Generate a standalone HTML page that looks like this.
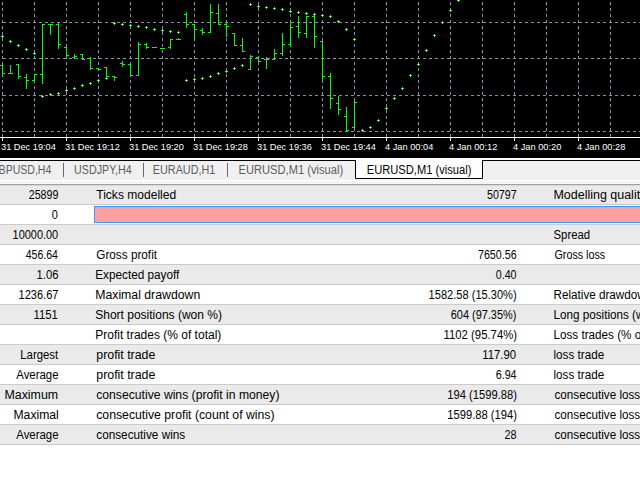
<!DOCTYPE html>
<html><head><meta charset="utf-8"><style>
html,body{margin:0;padding:0;background:#fff;width:640px;height:480px;overflow:hidden}
svg{display:block}
text{font-family:"Liberation Sans",sans-serif;white-space:pre}
</style></head><body>
<svg width="640" height="480" viewBox="0 0 640 480">
<rect x="0" y="0" width="640" height="480" fill="#ffffff"/>
<rect x="0" y="0" width="640" height="158" fill="#000000"/>
<g shape-rendering="crispEdges"><path fill="#8494a8" d="M2 2h1v3h-1zM2 8h1v3h-1zM2 14h1v3h-1zM2 20h1v3h-1zM2 26h1v3h-1zM2 32h1v3h-1zM2 38h1v3h-1zM2 44h1v3h-1zM2 50h1v3h-1zM2 56h1v3h-1zM2 62h1v3h-1zM2 68h1v3h-1zM2 74h1v3h-1zM2 80h1v3h-1zM2 86h1v3h-1zM2 92h1v3h-1zM2 98h1v3h-1zM2 104h1v3h-1zM2 110h1v3h-1zM2 116h1v3h-1zM2 122h1v3h-1zM2 128h1v3h-1zM2 134h1v3h-1zM34 2h1v3h-1zM34 8h1v3h-1zM34 14h1v3h-1zM34 20h1v3h-1zM34 26h1v3h-1zM34 32h1v3h-1zM34 38h1v3h-1zM34 44h1v3h-1zM34 50h1v3h-1zM34 56h1v3h-1zM34 62h1v3h-1zM34 68h1v3h-1zM34 74h1v3h-1zM34 80h1v3h-1zM34 86h1v3h-1zM34 92h1v3h-1zM34 98h1v3h-1zM34 104h1v3h-1zM34 110h1v3h-1zM34 116h1v3h-1zM34 122h1v3h-1zM34 128h1v3h-1zM34 134h1v3h-1zM66 2h1v3h-1zM66 8h1v3h-1zM66 14h1v3h-1zM66 20h1v3h-1zM66 26h1v3h-1zM66 32h1v3h-1zM66 38h1v3h-1zM66 44h1v3h-1zM66 50h1v3h-1zM66 56h1v3h-1zM66 62h1v3h-1zM66 68h1v3h-1zM66 74h1v3h-1zM66 80h1v3h-1zM66 86h1v3h-1zM66 92h1v3h-1zM66 98h1v3h-1zM66 104h1v3h-1zM66 110h1v3h-1zM66 116h1v3h-1zM66 122h1v3h-1zM66 128h1v3h-1zM66 134h1v3h-1zM98 2h1v3h-1zM98 8h1v3h-1zM98 14h1v3h-1zM98 20h1v3h-1zM98 26h1v3h-1zM98 32h1v3h-1zM98 38h1v3h-1zM98 44h1v3h-1zM98 50h1v3h-1zM98 56h1v3h-1zM98 62h1v3h-1zM98 68h1v3h-1zM98 74h1v3h-1zM98 80h1v3h-1zM98 86h1v3h-1zM98 92h1v3h-1zM98 98h1v3h-1zM98 104h1v3h-1zM98 110h1v3h-1zM98 116h1v3h-1zM98 122h1v3h-1zM98 128h1v3h-1zM98 134h1v3h-1zM130 2h1v3h-1zM130 8h1v3h-1zM130 14h1v3h-1zM130 20h1v3h-1zM130 26h1v3h-1zM130 32h1v3h-1zM130 38h1v3h-1zM130 44h1v3h-1zM130 50h1v3h-1zM130 56h1v3h-1zM130 62h1v3h-1zM130 68h1v3h-1zM130 74h1v3h-1zM130 80h1v3h-1zM130 86h1v3h-1zM130 92h1v3h-1zM130 98h1v3h-1zM130 104h1v3h-1zM130 110h1v3h-1zM130 116h1v3h-1zM130 122h1v3h-1zM130 128h1v3h-1zM130 134h1v3h-1zM162 2h1v3h-1zM162 8h1v3h-1zM162 14h1v3h-1zM162 20h1v3h-1zM162 26h1v3h-1zM162 32h1v3h-1zM162 38h1v3h-1zM162 44h1v3h-1zM162 50h1v3h-1zM162 56h1v3h-1zM162 62h1v3h-1zM162 68h1v3h-1zM162 74h1v3h-1zM162 80h1v3h-1zM162 86h1v3h-1zM162 92h1v3h-1zM162 98h1v3h-1zM162 104h1v3h-1zM162 110h1v3h-1zM162 116h1v3h-1zM162 122h1v3h-1zM162 128h1v3h-1zM162 134h1v3h-1zM194 2h1v3h-1zM194 8h1v3h-1zM194 14h1v3h-1zM194 20h1v3h-1zM194 26h1v3h-1zM194 32h1v3h-1zM194 38h1v3h-1zM194 44h1v3h-1zM194 50h1v3h-1zM194 56h1v3h-1zM194 62h1v3h-1zM194 68h1v3h-1zM194 74h1v3h-1zM194 80h1v3h-1zM194 86h1v3h-1zM194 92h1v3h-1zM194 98h1v3h-1zM194 104h1v3h-1zM194 110h1v3h-1zM194 116h1v3h-1zM194 122h1v3h-1zM194 128h1v3h-1zM194 134h1v3h-1zM226 2h1v3h-1zM226 8h1v3h-1zM226 14h1v3h-1zM226 20h1v3h-1zM226 26h1v3h-1zM226 32h1v3h-1zM226 38h1v3h-1zM226 44h1v3h-1zM226 50h1v3h-1zM226 56h1v3h-1zM226 62h1v3h-1zM226 68h1v3h-1zM226 74h1v3h-1zM226 80h1v3h-1zM226 86h1v3h-1zM226 92h1v3h-1zM226 98h1v3h-1zM226 104h1v3h-1zM226 110h1v3h-1zM226 116h1v3h-1zM226 122h1v3h-1zM226 128h1v3h-1zM226 134h1v3h-1zM258 2h1v3h-1zM258 8h1v3h-1zM258 14h1v3h-1zM258 20h1v3h-1zM258 26h1v3h-1zM258 32h1v3h-1zM258 38h1v3h-1zM258 44h1v3h-1zM258 50h1v3h-1zM258 56h1v3h-1zM258 62h1v3h-1zM258 68h1v3h-1zM258 74h1v3h-1zM258 80h1v3h-1zM258 86h1v3h-1zM258 92h1v3h-1zM258 98h1v3h-1zM258 104h1v3h-1zM258 110h1v3h-1zM258 116h1v3h-1zM258 122h1v3h-1zM258 128h1v3h-1zM258 134h1v3h-1zM290 2h1v3h-1zM290 8h1v3h-1zM290 14h1v3h-1zM290 20h1v3h-1zM290 26h1v3h-1zM290 32h1v3h-1zM290 38h1v3h-1zM290 44h1v3h-1zM290 50h1v3h-1zM290 56h1v3h-1zM290 62h1v3h-1zM290 68h1v3h-1zM290 74h1v3h-1zM290 80h1v3h-1zM290 86h1v3h-1zM290 92h1v3h-1zM290 98h1v3h-1zM290 104h1v3h-1zM290 110h1v3h-1zM290 116h1v3h-1zM290 122h1v3h-1zM290 128h1v3h-1zM290 134h1v3h-1zM322 2h1v3h-1zM322 8h1v3h-1zM322 14h1v3h-1zM322 20h1v3h-1zM322 26h1v3h-1zM322 32h1v3h-1zM322 38h1v3h-1zM322 44h1v3h-1zM322 50h1v3h-1zM322 56h1v3h-1zM322 62h1v3h-1zM322 68h1v3h-1zM322 74h1v3h-1zM322 80h1v3h-1zM322 86h1v3h-1zM322 92h1v3h-1zM322 98h1v3h-1zM322 104h1v3h-1zM322 110h1v3h-1zM322 116h1v3h-1zM322 122h1v3h-1zM322 128h1v3h-1zM322 134h1v3h-1zM354 2h1v3h-1zM354 8h1v3h-1zM354 14h1v3h-1zM354 20h1v3h-1zM354 26h1v3h-1zM354 32h1v3h-1zM354 38h1v3h-1zM354 44h1v3h-1zM354 50h1v3h-1zM354 56h1v3h-1zM354 62h1v3h-1zM354 68h1v3h-1zM354 74h1v3h-1zM354 80h1v3h-1zM354 86h1v3h-1zM354 92h1v3h-1zM354 98h1v3h-1zM354 104h1v3h-1zM354 110h1v3h-1zM354 116h1v3h-1zM354 122h1v3h-1zM354 128h1v3h-1zM354 134h1v3h-1zM386 2h1v3h-1zM386 8h1v3h-1zM386 14h1v3h-1zM386 20h1v3h-1zM386 26h1v3h-1zM386 32h1v3h-1zM386 38h1v3h-1zM386 44h1v3h-1zM386 50h1v3h-1zM386 56h1v3h-1zM386 62h1v3h-1zM386 68h1v3h-1zM386 74h1v3h-1zM386 80h1v3h-1zM386 86h1v3h-1zM386 92h1v3h-1zM386 98h1v3h-1zM386 104h1v3h-1zM386 110h1v3h-1zM386 116h1v3h-1zM386 122h1v3h-1zM386 128h1v3h-1zM386 134h1v3h-1zM418 2h1v3h-1zM418 8h1v3h-1zM418 14h1v3h-1zM418 20h1v3h-1zM418 26h1v3h-1zM418 32h1v3h-1zM418 38h1v3h-1zM418 44h1v3h-1zM418 50h1v3h-1zM418 56h1v3h-1zM418 62h1v3h-1zM418 68h1v3h-1zM418 74h1v3h-1zM418 80h1v3h-1zM418 86h1v3h-1zM418 92h1v3h-1zM418 98h1v3h-1zM418 104h1v3h-1zM418 110h1v3h-1zM418 116h1v3h-1zM418 122h1v3h-1zM418 128h1v3h-1zM418 134h1v3h-1zM450 2h1v3h-1zM450 8h1v3h-1zM450 14h1v3h-1zM450 20h1v3h-1zM450 26h1v3h-1zM450 32h1v3h-1zM450 38h1v3h-1zM450 44h1v3h-1zM450 50h1v3h-1zM450 56h1v3h-1zM450 62h1v3h-1zM450 68h1v3h-1zM450 74h1v3h-1zM450 80h1v3h-1zM450 86h1v3h-1zM450 92h1v3h-1zM450 98h1v3h-1zM450 104h1v3h-1zM450 110h1v3h-1zM450 116h1v3h-1zM450 122h1v3h-1zM450 128h1v3h-1zM450 134h1v3h-1zM482 2h1v3h-1zM482 8h1v3h-1zM482 14h1v3h-1zM482 20h1v3h-1zM482 26h1v3h-1zM482 32h1v3h-1zM482 38h1v3h-1zM482 44h1v3h-1zM482 50h1v3h-1zM482 56h1v3h-1zM482 62h1v3h-1zM482 68h1v3h-1zM482 74h1v3h-1zM482 80h1v3h-1zM482 86h1v3h-1zM482 92h1v3h-1zM482 98h1v3h-1zM482 104h1v3h-1zM482 110h1v3h-1zM482 116h1v3h-1zM482 122h1v3h-1zM482 128h1v3h-1zM482 134h1v3h-1zM514 2h1v3h-1zM514 8h1v3h-1zM514 14h1v3h-1zM514 20h1v3h-1zM514 26h1v3h-1zM514 32h1v3h-1zM514 38h1v3h-1zM514 44h1v3h-1zM514 50h1v3h-1zM514 56h1v3h-1zM514 62h1v3h-1zM514 68h1v3h-1zM514 74h1v3h-1zM514 80h1v3h-1zM514 86h1v3h-1zM514 92h1v3h-1zM514 98h1v3h-1zM514 104h1v3h-1zM514 110h1v3h-1zM514 116h1v3h-1zM514 122h1v3h-1zM514 128h1v3h-1zM514 134h1v3h-1zM546 2h1v3h-1zM546 8h1v3h-1zM546 14h1v3h-1zM546 20h1v3h-1zM546 26h1v3h-1zM546 32h1v3h-1zM546 38h1v3h-1zM546 44h1v3h-1zM546 50h1v3h-1zM546 56h1v3h-1zM546 62h1v3h-1zM546 68h1v3h-1zM546 74h1v3h-1zM546 80h1v3h-1zM546 86h1v3h-1zM546 92h1v3h-1zM546 98h1v3h-1zM546 104h1v3h-1zM546 110h1v3h-1zM546 116h1v3h-1zM546 122h1v3h-1zM546 128h1v3h-1zM546 134h1v3h-1zM578 2h1v3h-1zM578 8h1v3h-1zM578 14h1v3h-1zM578 20h1v3h-1zM578 26h1v3h-1zM578 32h1v3h-1zM578 38h1v3h-1zM578 44h1v3h-1zM578 50h1v3h-1zM578 56h1v3h-1zM578 62h1v3h-1zM578 68h1v3h-1zM578 74h1v3h-1zM578 80h1v3h-1zM578 86h1v3h-1zM578 92h1v3h-1zM578 98h1v3h-1zM578 104h1v3h-1zM578 110h1v3h-1zM578 116h1v3h-1zM578 122h1v3h-1zM578 128h1v3h-1zM578 134h1v3h-1zM610 2h1v3h-1zM610 8h1v3h-1zM610 14h1v3h-1zM610 20h1v3h-1zM610 26h1v3h-1zM610 32h1v3h-1zM610 38h1v3h-1zM610 44h1v3h-1zM610 50h1v3h-1zM610 56h1v3h-1zM610 62h1v3h-1zM610 68h1v3h-1zM610 74h1v3h-1zM610 80h1v3h-1zM610 86h1v3h-1zM610 92h1v3h-1zM610 98h1v3h-1zM610 104h1v3h-1zM610 110h1v3h-1zM610 116h1v3h-1zM610 122h1v3h-1zM610 128h1v3h-1zM610 134h1v3h-1zM3 22h3v1h-3zM9 22h3v1h-3zM15 22h3v1h-3zM21 22h3v1h-3zM27 22h3v1h-3zM33 22h3v1h-3zM39 22h3v1h-3zM45 22h3v1h-3zM51 22h3v1h-3zM57 22h3v1h-3zM63 22h3v1h-3zM69 22h3v1h-3zM75 22h3v1h-3zM81 22h3v1h-3zM87 22h3v1h-3zM93 22h3v1h-3zM99 22h3v1h-3zM105 22h3v1h-3zM111 22h3v1h-3zM117 22h3v1h-3zM123 22h3v1h-3zM129 22h3v1h-3zM135 22h3v1h-3zM141 22h3v1h-3zM147 22h3v1h-3zM153 22h3v1h-3zM159 22h3v1h-3zM165 22h3v1h-3zM171 22h3v1h-3zM177 22h3v1h-3zM183 22h3v1h-3zM189 22h3v1h-3zM195 22h3v1h-3zM201 22h3v1h-3zM207 22h3v1h-3zM213 22h3v1h-3zM219 22h3v1h-3zM225 22h3v1h-3zM231 22h3v1h-3zM237 22h3v1h-3zM243 22h3v1h-3zM249 22h3v1h-3zM255 22h3v1h-3zM261 22h3v1h-3zM267 22h3v1h-3zM273 22h3v1h-3zM279 22h3v1h-3zM285 22h3v1h-3zM291 22h3v1h-3zM297 22h3v1h-3zM303 22h3v1h-3zM309 22h3v1h-3zM315 22h3v1h-3zM321 22h3v1h-3zM327 22h3v1h-3zM333 22h3v1h-3zM339 22h3v1h-3zM345 22h3v1h-3zM351 22h3v1h-3zM357 22h3v1h-3zM363 22h3v1h-3zM369 22h3v1h-3zM375 22h3v1h-3zM381 22h3v1h-3zM387 22h3v1h-3zM393 22h3v1h-3zM399 22h3v1h-3zM405 22h3v1h-3zM411 22h3v1h-3zM417 22h3v1h-3zM423 22h3v1h-3zM429 22h3v1h-3zM435 22h3v1h-3zM441 22h3v1h-3zM447 22h3v1h-3zM453 22h3v1h-3zM459 22h3v1h-3zM465 22h3v1h-3zM471 22h3v1h-3zM477 22h3v1h-3zM483 22h3v1h-3zM489 22h3v1h-3zM495 22h3v1h-3zM501 22h3v1h-3zM507 22h3v1h-3zM513 22h3v1h-3zM519 22h3v1h-3zM525 22h3v1h-3zM531 22h3v1h-3zM537 22h3v1h-3zM543 22h3v1h-3zM549 22h3v1h-3zM555 22h3v1h-3zM561 22h3v1h-3zM567 22h3v1h-3zM573 22h3v1h-3zM579 22h3v1h-3zM585 22h3v1h-3zM591 22h3v1h-3zM597 22h3v1h-3zM603 22h3v1h-3zM609 22h3v1h-3zM615 22h3v1h-3zM621 22h3v1h-3zM627 22h3v1h-3zM633 22h3v1h-3zM639 22h1v1h-1zM2 22h1v1h-1zM3 58h3v1h-3zM9 58h3v1h-3zM15 58h3v1h-3zM21 58h3v1h-3zM27 58h3v1h-3zM33 58h3v1h-3zM39 58h3v1h-3zM45 58h3v1h-3zM51 58h3v1h-3zM57 58h3v1h-3zM63 58h3v1h-3zM69 58h3v1h-3zM75 58h3v1h-3zM81 58h3v1h-3zM87 58h3v1h-3zM93 58h3v1h-3zM99 58h3v1h-3zM105 58h3v1h-3zM111 58h3v1h-3zM117 58h3v1h-3zM123 58h3v1h-3zM129 58h3v1h-3zM135 58h3v1h-3zM141 58h3v1h-3zM147 58h3v1h-3zM153 58h3v1h-3zM159 58h3v1h-3zM165 58h3v1h-3zM171 58h3v1h-3zM177 58h3v1h-3zM183 58h3v1h-3zM189 58h3v1h-3zM195 58h3v1h-3zM201 58h3v1h-3zM207 58h3v1h-3zM213 58h3v1h-3zM219 58h3v1h-3zM225 58h3v1h-3zM231 58h3v1h-3zM237 58h3v1h-3zM243 58h3v1h-3zM249 58h3v1h-3zM255 58h3v1h-3zM261 58h3v1h-3zM267 58h3v1h-3zM273 58h3v1h-3zM279 58h3v1h-3zM285 58h3v1h-3zM291 58h3v1h-3zM297 58h3v1h-3zM303 58h3v1h-3zM309 58h3v1h-3zM315 58h3v1h-3zM321 58h3v1h-3zM327 58h3v1h-3zM333 58h3v1h-3zM339 58h3v1h-3zM345 58h3v1h-3zM351 58h3v1h-3zM357 58h3v1h-3zM363 58h3v1h-3zM369 58h3v1h-3zM375 58h3v1h-3zM381 58h3v1h-3zM387 58h3v1h-3zM393 58h3v1h-3zM399 58h3v1h-3zM405 58h3v1h-3zM411 58h3v1h-3zM417 58h3v1h-3zM423 58h3v1h-3zM429 58h3v1h-3zM435 58h3v1h-3zM441 58h3v1h-3zM447 58h3v1h-3zM453 58h3v1h-3zM459 58h3v1h-3zM465 58h3v1h-3zM471 58h3v1h-3zM477 58h3v1h-3zM483 58h3v1h-3zM489 58h3v1h-3zM495 58h3v1h-3zM501 58h3v1h-3zM507 58h3v1h-3zM513 58h3v1h-3zM519 58h3v1h-3zM525 58h3v1h-3zM531 58h3v1h-3zM537 58h3v1h-3zM543 58h3v1h-3zM549 58h3v1h-3zM555 58h3v1h-3zM561 58h3v1h-3zM567 58h3v1h-3zM573 58h3v1h-3zM579 58h3v1h-3zM585 58h3v1h-3zM591 58h3v1h-3zM597 58h3v1h-3zM603 58h3v1h-3zM609 58h3v1h-3zM615 58h3v1h-3zM621 58h3v1h-3zM627 58h3v1h-3zM633 58h3v1h-3zM639 58h1v1h-1zM2 58h1v1h-1zM3 95h3v1h-3zM9 95h3v1h-3zM15 95h3v1h-3zM21 95h3v1h-3zM27 95h3v1h-3zM33 95h3v1h-3zM39 95h3v1h-3zM45 95h3v1h-3zM51 95h3v1h-3zM57 95h3v1h-3zM63 95h3v1h-3zM69 95h3v1h-3zM75 95h3v1h-3zM81 95h3v1h-3zM87 95h3v1h-3zM93 95h3v1h-3zM99 95h3v1h-3zM105 95h3v1h-3zM111 95h3v1h-3zM117 95h3v1h-3zM123 95h3v1h-3zM129 95h3v1h-3zM135 95h3v1h-3zM141 95h3v1h-3zM147 95h3v1h-3zM153 95h3v1h-3zM159 95h3v1h-3zM165 95h3v1h-3zM171 95h3v1h-3zM177 95h3v1h-3zM183 95h3v1h-3zM189 95h3v1h-3zM195 95h3v1h-3zM201 95h3v1h-3zM207 95h3v1h-3zM213 95h3v1h-3zM219 95h3v1h-3zM225 95h3v1h-3zM231 95h3v1h-3zM237 95h3v1h-3zM243 95h3v1h-3zM249 95h3v1h-3zM255 95h3v1h-3zM261 95h3v1h-3zM267 95h3v1h-3zM273 95h3v1h-3zM279 95h3v1h-3zM285 95h3v1h-3zM291 95h3v1h-3zM297 95h3v1h-3zM303 95h3v1h-3zM309 95h3v1h-3zM315 95h3v1h-3zM321 95h3v1h-3zM327 95h3v1h-3zM333 95h3v1h-3zM339 95h3v1h-3zM345 95h3v1h-3zM351 95h3v1h-3zM357 95h3v1h-3zM363 95h3v1h-3zM369 95h3v1h-3zM375 95h3v1h-3zM381 95h3v1h-3zM387 95h3v1h-3zM393 95h3v1h-3zM399 95h3v1h-3zM405 95h3v1h-3zM411 95h3v1h-3zM417 95h3v1h-3zM423 95h3v1h-3zM429 95h3v1h-3zM435 95h3v1h-3zM441 95h3v1h-3zM447 95h3v1h-3zM453 95h3v1h-3zM459 95h3v1h-3zM465 95h3v1h-3zM471 95h3v1h-3zM477 95h3v1h-3zM483 95h3v1h-3zM489 95h3v1h-3zM495 95h3v1h-3zM501 95h3v1h-3zM507 95h3v1h-3zM513 95h3v1h-3zM519 95h3v1h-3zM525 95h3v1h-3zM531 95h3v1h-3zM537 95h3v1h-3zM543 95h3v1h-3zM549 95h3v1h-3zM555 95h3v1h-3zM561 95h3v1h-3zM567 95h3v1h-3zM573 95h3v1h-3zM579 95h3v1h-3zM585 95h3v1h-3zM591 95h3v1h-3zM597 95h3v1h-3zM603 95h3v1h-3zM609 95h3v1h-3zM615 95h3v1h-3zM621 95h3v1h-3zM627 95h3v1h-3zM633 95h3v1h-3zM639 95h1v1h-1zM2 95h1v1h-1zM3 131h3v1h-3zM9 131h3v1h-3zM15 131h3v1h-3zM21 131h3v1h-3zM27 131h3v1h-3zM33 131h3v1h-3zM39 131h3v1h-3zM45 131h3v1h-3zM51 131h3v1h-3zM57 131h3v1h-3zM63 131h3v1h-3zM69 131h3v1h-3zM75 131h3v1h-3zM81 131h3v1h-3zM87 131h3v1h-3zM93 131h3v1h-3zM99 131h3v1h-3zM105 131h3v1h-3zM111 131h3v1h-3zM117 131h3v1h-3zM123 131h3v1h-3zM129 131h3v1h-3zM135 131h3v1h-3zM141 131h3v1h-3zM147 131h3v1h-3zM153 131h3v1h-3zM159 131h3v1h-3zM165 131h3v1h-3zM171 131h3v1h-3zM177 131h3v1h-3zM183 131h3v1h-3zM189 131h3v1h-3zM195 131h3v1h-3zM201 131h3v1h-3zM207 131h3v1h-3zM213 131h3v1h-3zM219 131h3v1h-3zM225 131h3v1h-3zM231 131h3v1h-3zM237 131h3v1h-3zM243 131h3v1h-3zM249 131h3v1h-3zM255 131h3v1h-3zM261 131h3v1h-3zM267 131h3v1h-3zM273 131h3v1h-3zM279 131h3v1h-3zM285 131h3v1h-3zM291 131h3v1h-3zM297 131h3v1h-3zM303 131h3v1h-3zM309 131h3v1h-3zM315 131h3v1h-3zM321 131h3v1h-3zM327 131h3v1h-3zM333 131h3v1h-3zM339 131h3v1h-3zM345 131h3v1h-3zM351 131h3v1h-3zM357 131h3v1h-3zM363 131h3v1h-3zM369 131h3v1h-3zM375 131h3v1h-3zM381 131h3v1h-3zM387 131h3v1h-3zM393 131h3v1h-3zM399 131h3v1h-3zM405 131h3v1h-3zM411 131h3v1h-3zM417 131h3v1h-3zM423 131h3v1h-3zM429 131h3v1h-3zM435 131h3v1h-3zM441 131h3v1h-3zM447 131h3v1h-3zM453 131h3v1h-3zM459 131h3v1h-3zM465 131h3v1h-3zM471 131h3v1h-3zM477 131h3v1h-3zM483 131h3v1h-3zM489 131h3v1h-3zM495 131h3v1h-3zM501 131h3v1h-3zM507 131h3v1h-3zM513 131h3v1h-3zM519 131h3v1h-3zM525 131h3v1h-3zM531 131h3v1h-3zM537 131h3v1h-3zM543 131h3v1h-3zM549 131h3v1h-3zM555 131h3v1h-3zM561 131h3v1h-3zM567 131h3v1h-3zM573 131h3v1h-3zM579 131h3v1h-3zM585 131h3v1h-3zM591 131h3v1h-3zM597 131h3v1h-3zM603 131h3v1h-3zM609 131h3v1h-3zM615 131h3v1h-3zM621 131h3v1h-3zM627 131h3v1h-3zM633 131h3v1h-3zM639 131h1v1h-1zM2 131h1v1h-1z"/><path fill="#00ff00" d="M2 64h1v13h-1zM0 65h2v1h-2zM3 73h2v1h-2zM10 65h1v9h-1zM8 73h2v1h-2zM11 73h2v1h-2zM18 64h1v15h-1zM16 64h2v1h-2zM19 76h2v1h-2zM26 74h1v15h-1zM24 77h2v1h-2zM27 80h2v1h-2zM34 74h1v7h-1zM32 80h2v1h-2zM35 74h2v1h-2zM42 24h1v60h-1zM40 74h2v1h-2zM43 24h2v1h-2zM50 24h1v11h-1zM48 24h2v1h-2zM51 24h2v1h-2zM58 23h1v26h-1zM56 24h2v1h-2zM59 44h2v1h-2zM66 47h1v11h-1zM64 47h2v1h-2zM67 55h2v1h-2zM74 54h1v5h-1zM72 57h2v1h-2zM75 56h2v1h-2zM82 54h1v6h-1zM80 54h2v1h-2zM83 59h2v1h-2zM90 57h1v13h-1zM88 58h2v1h-2zM91 68h2v1h-2zM98 68h1v2h-1zM96 68h2v1h-2zM99 69h2v1h-2zM106 67h1v11h-1zM104 67h2v1h-2zM107 76h2v1h-2zM114 76h1v5h-1zM112 76h2v1h-2zM115 77h2v1h-2zM122 61h1v6h-1zM120 63h2v1h-2zM123 64h2v1h-2zM130 64h1v12h-1zM128 64h2v1h-2zM131 75h2v1h-2zM138 42h1v34h-1zM136 75h2v1h-2zM139 44h2v1h-2zM146 43h1v6h-1zM144 44h2v1h-2zM147 47h2v1h-2zM154 47h1v1h-1zM152 47h2v1h-2zM155 47h2v1h-2zM162 48h1v1h-1zM160 48h2v1h-2zM163 48h2v1h-2zM170 39h1v10h-1zM168 47h2v1h-2zM171 39h2v1h-2zM178 38h1v2h-1zM176 39h2v1h-2zM179 39h2v1h-2zM186 12h1v16h-1zM184 14h2v1h-2zM187 24h2v1h-2zM194 24h1v16h-1zM192 24h2v1h-2zM195 29h2v1h-2zM202 28h1v7h-1zM200 30h2v1h-2zM203 32h2v1h-2zM210 4h1v29h-1zM208 32h2v1h-2zM211 12h2v1h-2zM218 4h1v21h-1zM216 13h2v1h-2zM219 24h2v1h-2zM226 23h1v14h-1zM224 24h2v1h-2zM227 26h2v1h-2zM234 33h1v13h-1zM232 33h2v1h-2zM235 45h2v1h-2zM242 38h1v14h-1zM240 45h2v1h-2zM243 51h2v1h-2zM250 55h1v15h-1zM248 69h2v1h-2zM251 56h2v1h-2zM258 56h1v6h-1zM256 57h2v1h-2zM259 61h2v1h-2zM266 57h1v12h-1zM264 59h2v1h-2zM267 59h2v1h-2zM274 49h1v11h-1zM272 59h2v1h-2zM275 53h2v1h-2zM282 33h1v23h-1zM280 53h2v1h-2zM283 44h2v1h-2zM290 21h1v26h-1zM288 44h2v1h-2zM291 27h2v1h-2zM298 16h1v22h-1zM296 26h2v1h-2zM299 32h2v1h-2zM306 16h1v22h-1zM304 33h2v1h-2zM307 16h2v1h-2zM314 13h1v35h-1zM312 16h2v1h-2zM315 36h2v1h-2zM322 41h1v40h-1zM320 41h2v1h-2zM323 76h2v1h-2zM330 73h1v36h-1zM328 76h2v1h-2zM331 98h2v1h-2zM338 96h1v19h-1zM336 103h2v1h-2zM339 109h2v1h-2zM346 107h1v24h-1zM344 116h2v1h-2zM347 130h2v1h-2zM354 101h1v27h-1zM352 127h2v1h-2zM355 102h2v1h-2zM1 36h3v1h-3zM2 35h1v3h-1zM9 41h3v1h-3zM10 40h1v3h-1zM17 45h3v1h-3zM18 44h1v3h-1zM25 49h3v1h-3zM26 48h1v3h-1zM33 53h3v1h-3zM34 52h1v3h-1zM41 96h3v1h-3zM42 95h1v3h-1zM49 94h3v1h-3zM50 93h1v3h-1zM57 93h3v1h-3zM58 92h1v3h-1zM65 90h3v1h-3zM66 89h1v3h-1zM73 88h3v1h-3zM74 87h1v3h-1zM81 85h3v1h-3zM82 84h1v3h-1zM89 83h3v1h-3zM90 82h1v3h-1zM97 80h3v1h-3zM98 79h1v3h-1zM105 78h3v1h-3zM106 77h1v3h-1zM113 23h3v1h-3zM114 22h1v3h-1zM121 24h3v1h-3zM122 23h1v3h-1zM129 25h3v1h-3zM130 24h1v3h-1zM137 26h3v1h-3zM138 25h1v3h-1zM145 27h3v1h-3zM146 26h1v3h-1zM153 29h3v1h-3zM154 28h1v3h-1zM161 30h3v1h-3zM162 29h1v3h-1zM169 31h3v1h-3zM170 30h1v3h-1zM177 32h3v1h-3zM178 31h1v3h-1zM185 80h3v1h-3zM186 79h1v3h-1zM193 79h3v1h-3zM194 78h1v3h-1zM201 78h3v1h-3zM202 77h1v3h-1zM209 76h3v1h-3zM210 75h1v3h-1zM217 73h3v1h-3zM218 72h1v3h-1zM225 71h3v1h-3zM226 70h1v3h-1zM233 68h3v1h-3zM234 67h1v3h-1zM241 65h3v1h-3zM242 64h1v3h-1zM249 4h3v1h-3zM250 3h1v3h-1zM257 6h3v1h-3zM258 5h1v3h-1zM265 7h3v1h-3zM266 6h1v3h-1zM273 8h3v1h-3zM274 7h1v3h-1zM281 9h3v1h-3zM282 8h1v3h-1zM289 11h3v1h-3zM290 10h1v3h-1zM297 12h3v1h-3zM298 11h1v3h-1zM305 13h3v1h-3zM306 12h1v3h-1zM313 14h3v1h-3zM314 13h1v3h-1zM321 15h3v1h-3zM322 14h1v3h-1zM329 16h3v1h-3zM330 15h1v3h-1zM337 21h3v1h-3zM338 20h1v3h-1zM345 29h3v1h-3zM346 28h1v3h-1zM353 39h3v1h-3zM354 38h1v3h-1zM361 130h3v1h-3zM362 129h1v3h-1zM369 127h3v1h-3zM370 126h1v3h-1zM377 120h3v1h-3zM378 119h1v3h-1zM385 108h3v1h-3zM386 107h1v3h-1zM393 98h3v1h-3zM394 97h1v3h-1zM401 88h3v1h-3zM402 87h1v3h-1zM409 75h3v1h-3zM410 74h1v3h-1zM417 64h3v1h-3zM418 63h1v3h-1zM425 50h3v1h-3zM426 49h1v3h-1zM433 35h3v1h-3zM434 34h1v3h-1zM441 22h3v1h-3zM442 21h1v3h-1zM449 10h3v1h-3zM450 9h1v3h-1zM457 0h3v1h-3zM458 -1h1v3h-1z"/><path fill="#ffffff" d="M2 36h1v1h-1zM10 41h1v1h-1zM18 45h1v1h-1zM26 49h1v1h-1zM34 53h1v1h-1zM42 96h1v1h-1zM50 94h1v1h-1zM58 93h1v1h-1zM66 90h1v1h-1zM74 88h1v1h-1zM82 85h1v1h-1zM90 83h1v1h-1zM98 80h1v1h-1zM106 78h1v1h-1zM114 23h1v1h-1zM122 24h1v1h-1zM130 25h1v1h-1zM138 26h1v1h-1zM146 27h1v1h-1zM154 29h1v1h-1zM162 30h1v1h-1zM170 31h1v1h-1zM178 32h1v1h-1zM186 80h1v1h-1zM194 79h1v1h-1zM202 78h1v1h-1zM210 76h1v1h-1zM218 73h1v1h-1zM226 71h1v1h-1zM234 68h1v1h-1zM242 65h1v1h-1zM250 4h1v1h-1zM258 6h1v1h-1zM266 7h1v1h-1zM274 8h1v1h-1zM282 9h1v1h-1zM290 11h1v1h-1zM298 12h1v1h-1zM306 13h1v1h-1zM314 14h1v1h-1zM322 15h1v1h-1zM330 16h1v1h-1zM338 21h1v1h-1zM346 29h1v1h-1zM354 39h1v1h-1zM362 130h1v1h-1zM370 127h1v1h-1zM378 120h1v1h-1zM386 108h1v1h-1zM394 98h1v1h-1zM402 88h1v1h-1zM410 75h1v1h-1zM418 64h1v1h-1zM426 50h1v1h-1zM434 35h1v1h-1zM442 22h1v1h-1zM450 10h1v1h-1zM458 0h1v1h-1zM0 137h640v1h-640zM2 138h1v3h-1zM66 138h1v3h-1zM130 138h1v3h-1zM194 138h1v3h-1zM258 138h1v3h-1zM322 138h1v3h-1zM386 138h1v3h-1zM450 138h1v3h-1zM514 138h1v3h-1zM578 138h1v3h-1z"/></g>
<rect x="0" y="158" width="640" height="2" fill="#ffffff"/>
<rect x="0" y="160" width="640" height="1" fill="#000000"/>
<rect x="0" y="161" width="640" height="18" fill="#f0f0f0"/>
<rect x="0" y="179" width="640" height="1" fill="#f0f0f0"/>
<rect x="0" y="180" width="640" height="1" fill="#ffffff"/>
<rect x="0" y="181" width="640" height="3" fill="#f5f5f5"/>
<rect x="0" y="185" width="640" height="19" fill="#eaeaea"/><rect x="0" y="204" width="640" height="1" fill="#cbcbcb"/><rect x="0" y="205" width="640" height="19" fill="#ffffff"/><rect x="0" y="224" width="640" height="1" fill="#cbcbcb"/><rect x="0" y="225" width="640" height="19" fill="#eaeaea"/><rect x="0" y="244" width="640" height="1" fill="#cbcbcb"/><rect x="0" y="245" width="640" height="19" fill="#ffffff"/><rect x="0" y="264" width="640" height="1" fill="#cbcbcb"/><rect x="0" y="265" width="640" height="19" fill="#eaeaea"/><rect x="0" y="284" width="640" height="1" fill="#cbcbcb"/><rect x="0" y="285" width="640" height="19" fill="#ffffff"/><rect x="0" y="304" width="640" height="1" fill="#cbcbcb"/><rect x="0" y="305" width="640" height="19" fill="#eaeaea"/><rect x="0" y="324" width="640" height="1" fill="#cbcbcb"/><rect x="0" y="325" width="640" height="19" fill="#ffffff"/><rect x="0" y="344" width="640" height="1" fill="#cbcbcb"/><rect x="0" y="345" width="640" height="19" fill="#eaeaea"/><rect x="0" y="364" width="640" height="1" fill="#cbcbcb"/><rect x="0" y="365" width="640" height="19" fill="#ffffff"/><rect x="0" y="384" width="640" height="1" fill="#cbcbcb"/><rect x="0" y="385" width="640" height="19" fill="#eaeaea"/><rect x="0" y="404" width="640" height="1" fill="#cbcbcb"/><rect x="0" y="405" width="640" height="19" fill="#ffffff"/><rect x="0" y="424" width="640" height="1" fill="#cbcbcb"/><rect x="0" y="425" width="640" height="19" fill="#eaeaea"/><rect x="0" y="444" width="640" height="1" fill="#cbcbcb"/>
<rect x="0" y="184" width="640" height="1" fill="#a0a0a0"/>
<rect x="0" y="185" width="640" height="1" fill="#d8d8d8"/>
<rect x="94.5" y="206.5" width="560" height="16" fill="#ffa0a0" stroke="#3399ff" stroke-width="1"/>
<rect x="63" y="163" width="1" height="14" fill="#6a6a6a"/>
<rect x="143" y="163" width="1" height="14" fill="#6a6a6a"/>
<rect x="227" y="163" width="1" height="14" fill="#6a6a6a"/>
<path d="M355.5 160V178.5H482.5V160" fill="#ffffff" stroke="#000" stroke-width="1"/>
<rect x="356" y="160" width="126" height="18" fill="#ffffff"/>
<text x="-1.38" y="174" font-size="12" fill="#5c5c5c" textLength="52.65" lengthAdjust="spacingAndGlyphs">BPUSD,H4</text><text x="74.11" y="174" font-size="12" fill="#5c5c5c" textLength="57.58" lengthAdjust="spacingAndGlyphs">USDJPY,H4</text><text x="152.85" y="174" font-size="12" fill="#5c5c5c" textLength="62.47" lengthAdjust="spacingAndGlyphs">EURAUD,H1</text><text x="238.57" y="174" font-size="12" fill="#5c5c5c" textLength="104.57" lengthAdjust="spacingAndGlyphs">EURUSD,M1 (visual)</text><text x="366.77" y="174" font-size="12" fill="#000" textLength="104.67" lengthAdjust="spacingAndGlyphs">EURUSD,M1 (visual)</text><text x="1.00" y="150" font-size="9.8" fill="#fff" textLength="54.86" lengthAdjust="spacingAndGlyphs">31 Dec 19:04</text><text x="65.00" y="150" font-size="9.8" fill="#fff" textLength="54.86" lengthAdjust="spacingAndGlyphs">31 Dec 19:12</text><text x="129.00" y="150" font-size="9.8" fill="#fff" textLength="54.86" lengthAdjust="spacingAndGlyphs">31 Dec 19:20</text><text x="193.00" y="150" font-size="9.8" fill="#fff" textLength="54.86" lengthAdjust="spacingAndGlyphs">31 Dec 19:28</text><text x="257.00" y="150" font-size="9.8" fill="#fff" textLength="54.86" lengthAdjust="spacingAndGlyphs">31 Dec 19:36</text><text x="321.00" y="150" font-size="9.8" fill="#fff" textLength="54.86" lengthAdjust="spacingAndGlyphs">31 Dec 19:44</text><text x="385.00" y="150" font-size="9.8" fill="#fff" textLength="48.31" lengthAdjust="spacingAndGlyphs">4 Jan 00:04</text><text x="449.00" y="150" font-size="9.8" fill="#fff" textLength="48.31" lengthAdjust="spacingAndGlyphs">4 Jan 00:12</text><text x="513.00" y="150" font-size="9.8" fill="#fff" textLength="48.31" lengthAdjust="spacingAndGlyphs">4 Jan 00:20</text><text x="577.00" y="150" font-size="9.8" fill="#fff" textLength="48.31" lengthAdjust="spacingAndGlyphs">4 Jan 00:28</text><text x="28.75" y="199" font-size="12" fill="#000" textLength="29.68" lengthAdjust="spacingAndGlyphs">25899</text><text x="96.25" y="199" font-size="12" fill="#000" textLength="79.95" lengthAdjust="spacingAndGlyphs">Ticks modelled</text><text x="487.00" y="199" font-size="12" fill="#000" textLength="29.58" lengthAdjust="spacingAndGlyphs">50797</text><text x="553.46" y="199" font-size="12" fill="#000" textLength="92.91" lengthAdjust="spacingAndGlyphs">Modelling quality</text><text x="51.71" y="219" font-size="12" fill="#000" textLength="6.10" lengthAdjust="spacingAndGlyphs">0</text><text x="12.59" y="239" font-size="12" fill="#000" textLength="45.57" lengthAdjust="spacingAndGlyphs">10000.00</text><text x="553.55" y="239" font-size="12" fill="#000" textLength="36.61" lengthAdjust="spacingAndGlyphs">Spread</text><text x="25.75" y="259" font-size="12" fill="#000" textLength="32.09" lengthAdjust="spacingAndGlyphs">456.64</text><text x="96.25" y="259" font-size="12" fill="#000" textLength="60.77" lengthAdjust="spacingAndGlyphs">Gross profit</text><text x="478.00" y="259" font-size="12" fill="#000" textLength="38.60" lengthAdjust="spacingAndGlyphs">7650.56</text><text x="554.50" y="259" font-size="12" fill="#000" textLength="50.72" lengthAdjust="spacingAndGlyphs">Gross loss</text><text x="36.56" y="279" font-size="12" fill="#000" textLength="21.87" lengthAdjust="spacingAndGlyphs">1.06</text><text x="95.27" y="279" font-size="12" fill="#000" textLength="84.08" lengthAdjust="spacingAndGlyphs">Expected payoff</text><text x="495.75" y="279" font-size="12" fill="#000" textLength="20.82" lengthAdjust="spacingAndGlyphs">0.40</text><text x="18.58" y="299" font-size="12" fill="#000" textLength="39.88" lengthAdjust="spacingAndGlyphs">1236.67</text><text x="95.23" y="299" font-size="12" fill="#000" textLength="104.99" lengthAdjust="spacingAndGlyphs">Maximal drawdown</text><text x="428.58" y="299" font-size="12" fill="#000" textLength="88.05" lengthAdjust="spacingAndGlyphs">1582.58 (15.30%)</text><text x="553.53" y="299" font-size="12" fill="#000" textLength="98.70" lengthAdjust="spacingAndGlyphs">Relative drawdown</text><text x="33.56" y="319" font-size="12" fill="#000" textLength="24.37" lengthAdjust="spacingAndGlyphs">1151</text><text x="95.25" y="319" font-size="12" fill="#000" textLength="126.73" lengthAdjust="spacingAndGlyphs">Short positions (won %)</text><text x="450.75" y="319" font-size="12" fill="#000" textLength="65.54" lengthAdjust="spacingAndGlyphs">604 (97.35%)</text><text x="553.53" y="319" font-size="12" fill="#000" textLength="121.42" lengthAdjust="spacingAndGlyphs">Long positions (won %)</text><text x="95.25" y="339" font-size="12" fill="#000" textLength="126.05" lengthAdjust="spacingAndGlyphs">Profit trades (% of total)</text><text x="443.56" y="339" font-size="12" fill="#000" textLength="73.49" lengthAdjust="spacingAndGlyphs">1102 (95.74%)</text><text x="553.53" y="339" font-size="12" fill="#000" textLength="120.11" lengthAdjust="spacingAndGlyphs">Loss trades (% of total)</text><text x="20.31" y="359" font-size="12" fill="#000" textLength="37.82" lengthAdjust="spacingAndGlyphs">Largest</text><text x="96.25" y="359" font-size="12" fill="#000" textLength="59.14" lengthAdjust="spacingAndGlyphs">profit trade</text><text x="482.31" y="359" font-size="12" fill="#000" textLength="33.77" lengthAdjust="spacingAndGlyphs">117.90</text><text x="553.53" y="359" font-size="12" fill="#000" textLength="50.65" lengthAdjust="spacingAndGlyphs">loss trade</text><text x="16.25" y="379" font-size="12" fill="#000" textLength="42.31" lengthAdjust="spacingAndGlyphs">Average</text><text x="96.25" y="379" font-size="12" fill="#000" textLength="59.14" lengthAdjust="spacingAndGlyphs">profit trade</text><text x="495.75" y="379" font-size="12" fill="#000" textLength="20.82" lengthAdjust="spacingAndGlyphs">6.94</text><text x="553.53" y="379" font-size="12" fill="#000" textLength="50.65" lengthAdjust="spacingAndGlyphs">loss trade</text><text x="4.47" y="399" font-size="12" fill="#000" textLength="53.65" lengthAdjust="spacingAndGlyphs">Maximum</text><text x="96.25" y="399" font-size="12" fill="#000" textLength="183.26" lengthAdjust="spacingAndGlyphs">consecutive wins (profit in money)</text><text x="447.32" y="399" font-size="12" fill="#000" textLength="69.62" lengthAdjust="spacingAndGlyphs">194 (1599.88)</text><text x="554.50" y="399" font-size="12" fill="#000" textLength="180.49" lengthAdjust="spacingAndGlyphs">consecutive losses (loss in money)</text><text x="13.49" y="419" font-size="12" fill="#000" textLength="45.30" lengthAdjust="spacingAndGlyphs">Maximal</text><text x="96.25" y="419" font-size="12" fill="#000" textLength="178.27" lengthAdjust="spacingAndGlyphs">consecutive profit (count of wins)</text><text x="447.32" y="419" font-size="12" fill="#000" textLength="69.62" lengthAdjust="spacingAndGlyphs">1599.88 (194)</text><text x="554.50" y="419" font-size="12" fill="#000" textLength="174.65" lengthAdjust="spacingAndGlyphs">consecutive loss (count of losses)</text><text x="16.25" y="439" font-size="12" fill="#000" textLength="42.31" lengthAdjust="spacingAndGlyphs">Average</text><text x="96.25" y="439" font-size="12" fill="#000" textLength="88.97" lengthAdjust="spacingAndGlyphs">consecutive wins</text><text x="504.50" y="439" font-size="12" fill="#000" textLength="12.07" lengthAdjust="spacingAndGlyphs">28</text><text x="554.50" y="439" font-size="12" fill="#000" textLength="98.04" lengthAdjust="spacingAndGlyphs">consecutive losses</text>
</svg>
</body></html>
